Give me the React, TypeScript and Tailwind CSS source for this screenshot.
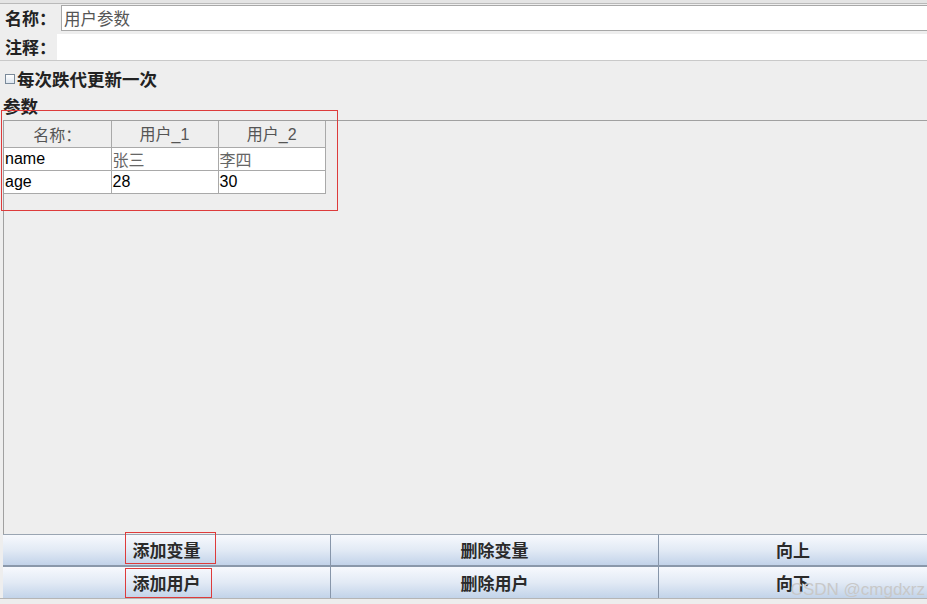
import React from "react";

const cjk = { fontFamily: '"Noto Sans CJK SC", "Noto Sans", sans-serif' };
const arial = { fontFamily: '"Liberation Sans", "Noto Sans CJK SC", sans-serif' };

function Btn({ label, last }: { label: string; last?: boolean }) {
  return (
    <div
      className={`flex h-full items-center justify-center bg-gradient-to-b from-[#f7f9fd] via-[#e2eaf5] to-[#c2d3e9] ${last ? "" : "border-r border-[#8796aa]"}`}
    >
      <span className="text-[17px] font-semibold text-[#2a2a2a]" style={cjk}>
        {label}
      </span>
    </div>
  );
}

export default function App() {
  return (
    <div className="relative flex h-[604px] w-[927px] flex-col overflow-hidden bg-[#eeeeee]">
      {/* top edge */}
      <div className="h-[4px] border-b border-[#b9b9b9] bg-[#e4e4e4]" />
      {/* name row */}
      <div className="flex h-[28px] items-center">
        <div className="w-[61px] pl-[5px] text-[17px] font-semibold text-[#222]" style={cjk}>
          名称：
        </div>
        <div className="flex h-[26px] flex-1 items-center border-b border-l border-t border-[#a8a8a8] bg-white pl-[2px] text-[16.5px] text-[#555]" style={cjk}>
          用户参数
        </div>
      </div>
      {/* comment row */}
      <div className="flex h-[28px] items-end">
        <div className="flex h-[26px] w-[57px] items-center pl-[5px] text-[17px] font-semibold text-[#222]" style={cjk}>
          注释：
        </div>
        <div className="h-[26px] flex-1 bg-white" />
      </div>
      <div className="h-px bg-[#c9c9c9]" />
      {/* checkbox */}
      <div className="flex h-[34px] items-center pl-[5px] pt-[2px]">
        <div className="mr-[2px] h-[10px] w-[10px] border border-[#7a8a9a] bg-gradient-to-b from-white to-[#dde6f0]" />
        <span className="text-[17.5px] font-semibold text-[#222]" style={cjk}>
          每次跌代更新一次
        </span>
      </div>
      {/* params label */}
      <div className="flex h-[25px] items-start pl-[3px] text-[17.5px] font-semibold leading-[22px] text-[#222]" style={cjk}>
        参数
      </div>
      {/* panel */}
      <div className="ml-[3px] flex flex-1 flex-col border-l border-t border-[#a0a0a0]">
        <table className="w-[322px] border-collapse text-[16px]" style={arial}>
          <thead>
            <tr className="h-[26px] bg-[#eeeeee]">
              <th className="w-[107px] border border-l-0 border-t-0 border-[#a9a9a9] font-normal text-[#555]" style={cjk}>
                名称：
              </th>
              <th className="w-[107px] border border-t-0 border-[#a9a9a9] font-normal text-[#555]" style={arial}>
                <span style={cjk}>用户</span>_1
              </th>
              <th className="border border-t-0 border-[#a9a9a9] font-normal text-[#555]" style={arial}>
                <span style={cjk}>用户</span>_2
              </th>
            </tr>
          </thead>
          <tbody className="bg-white">
            <tr className="h-[23px]">
              <td className="border border-l-0 border-[#a9a9a9] pl-[1px] leading-none text-black">name</td>
              <td className="border border-[#a9a9a9] pl-[1px] leading-none text-[#666]" style={cjk}>张三</td>
              <td className="border border-[#a9a9a9] pl-[1px] leading-none text-[#666]" style={cjk}>李四</td>
            </tr>
            <tr className="h-[23px]">
              <td className="border border-l-0 border-[#a9a9a9] pl-[1px] leading-none text-black">age</td>
              <td className="border border-[#a9a9a9] pl-[1px] leading-none text-black">28</td>
              <td className="border border-[#a9a9a9] pl-[1px] leading-none text-black">30</td>
            </tr>
          </tbody>
        </table>
      </div>
      {/* buttons */}
      <div className="ml-[3px] flex flex-col border-t border-[#9aa5b2]">
        <div className="grid h-[32px] grid-cols-[328px_328px_1fr] border-b-2 border-[#8a98aa]">
          <Btn label="添加变量" />
          <Btn label="删除变量" />
          <Btn label="向上" last />
        </div>
        <div className="grid h-[31px] grid-cols-[328px_328px_1fr]">
          <Btn label="添加用户" />
          <Btn label="删除用户" />
          <Btn label="向下" last />
        </div>
      </div>
      <div className="h-[6px] border-t border-[#b5b5b5] bg-[#ededed]" />

      {/* annotation overlays */}
      <div className="pointer-events-none absolute left-[1px] top-[110px] h-[101px] w-[337px] border border-[#dd3b3b]" />
      <div className="pointer-events-none absolute left-[125px] top-[532px] h-[32px] w-[91px] border border-[#dd3b3b]" />
      <div className="pointer-events-none absolute left-[125px] top-[568px] h-[30px] w-[87px] border border-[#dd3b3b]" />
      <div className="pointer-events-none absolute right-[2px] top-[577px] text-[17px] text-[#c8c8c8]" style={arial}>
        CSDN @cmgdxrz
      </div>
    </div>
  );
}
